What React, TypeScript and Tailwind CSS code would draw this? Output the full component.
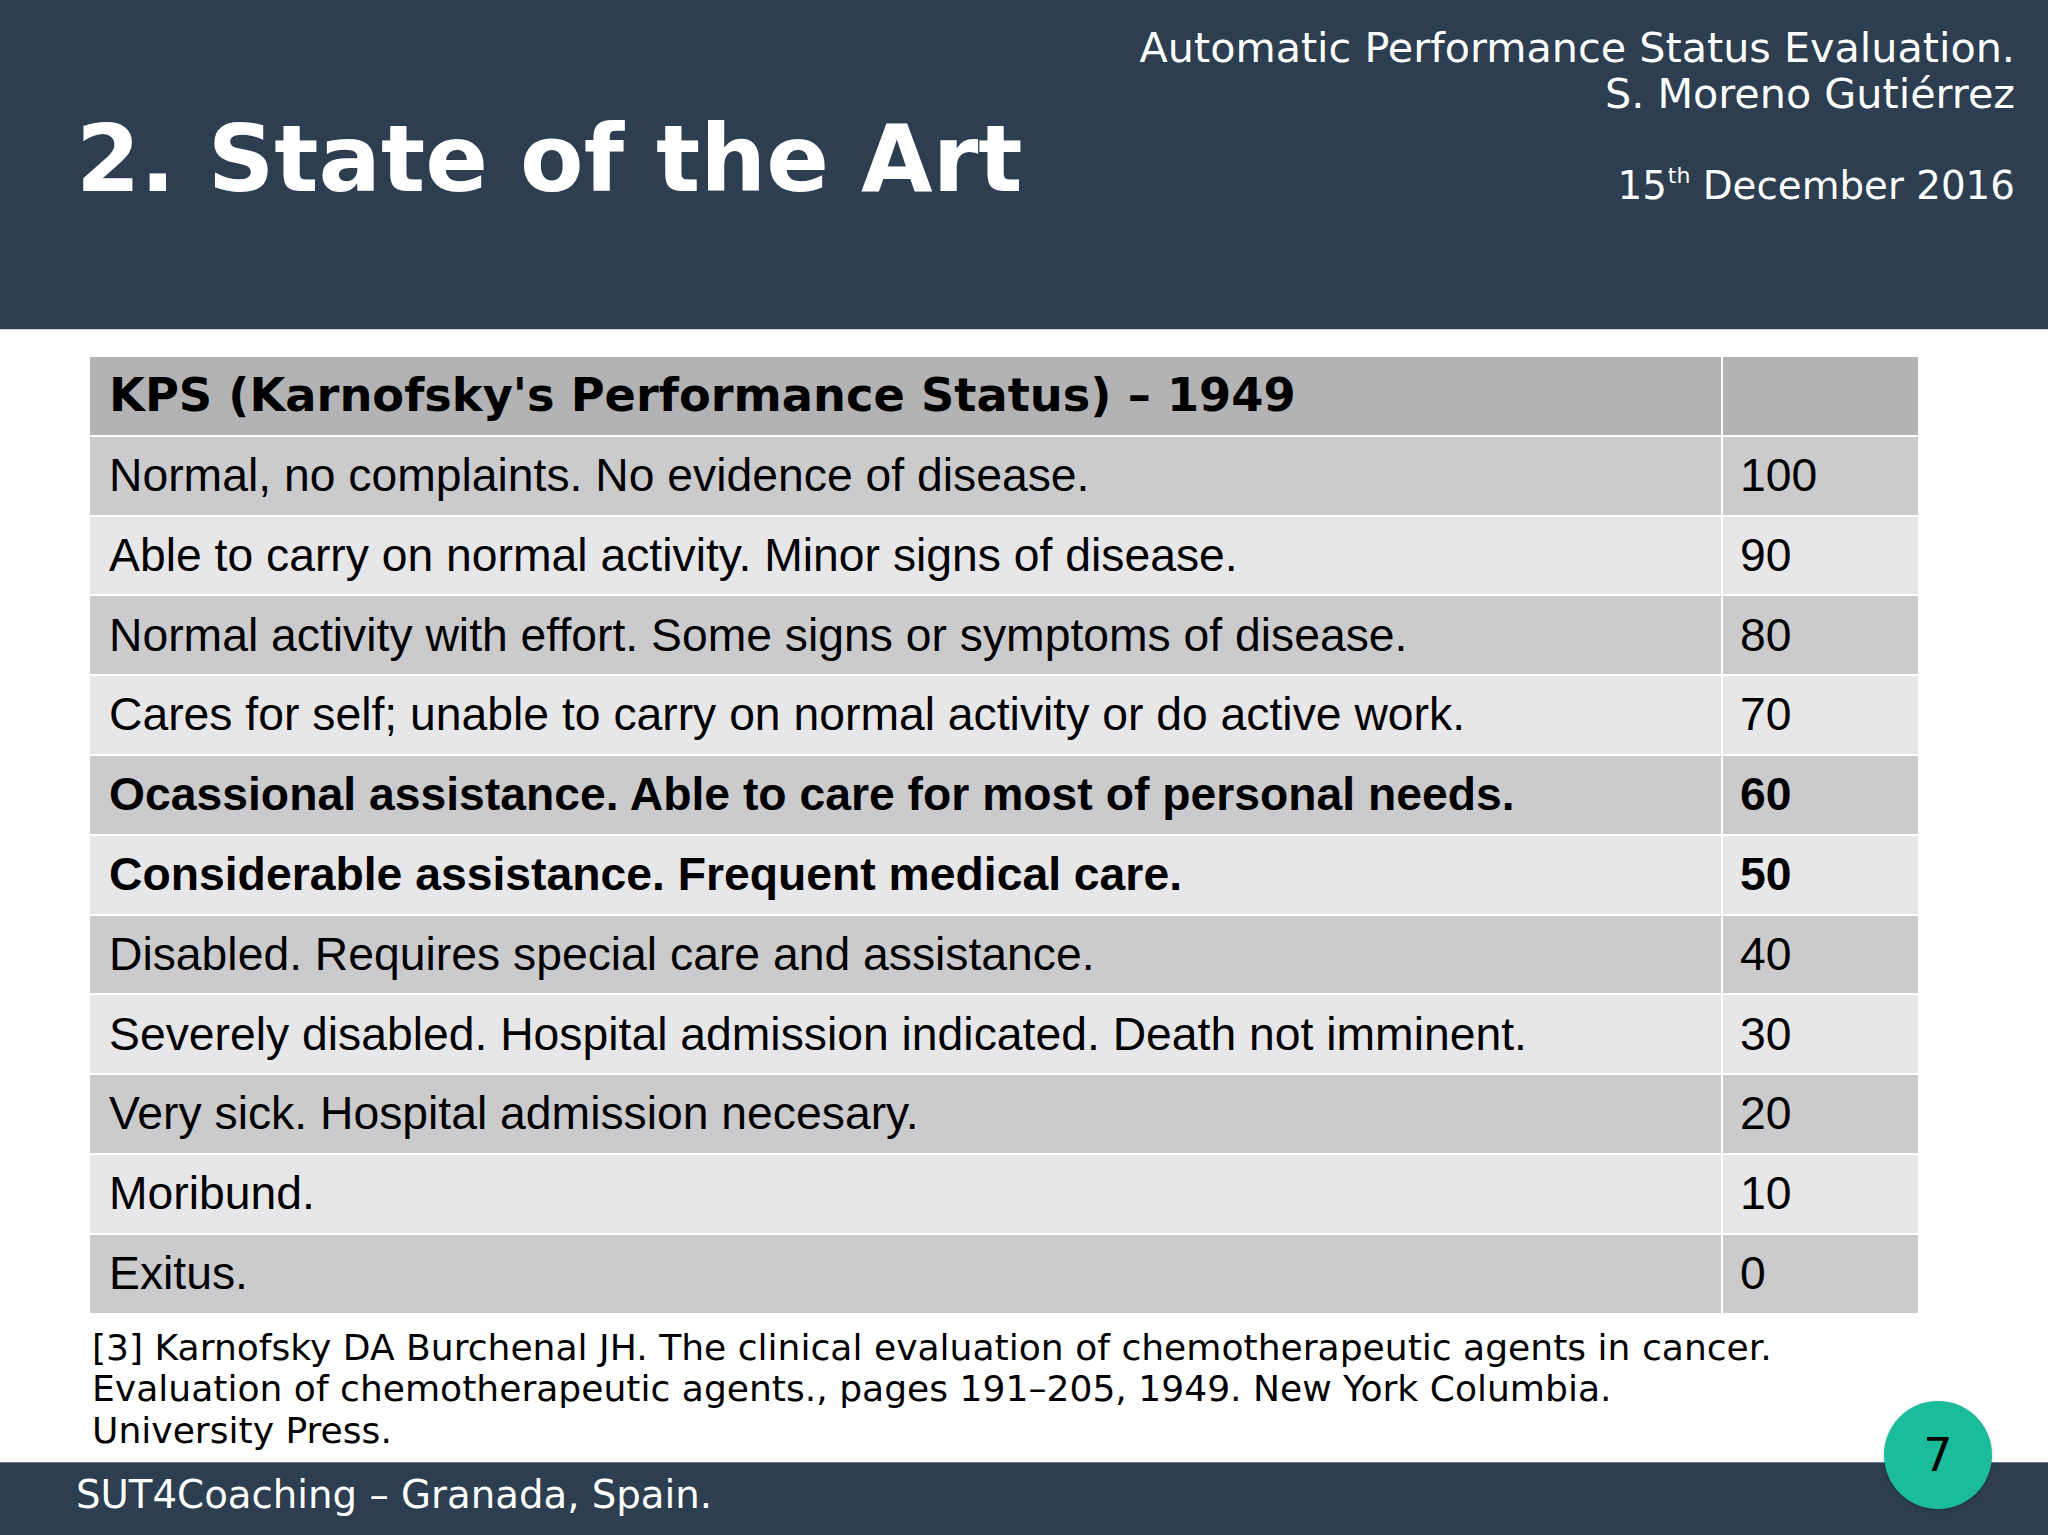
import React from "react";

const rows: { t: string; v: string; bold?: boolean }[] = [
  { t: "Normal, no complaints. No evidence of disease.", v: "100" },
  { t: "Able to carry on normal activity. Minor signs of disease.", v: "90" },
  { t: "Normal activity with effort. Some signs or symptoms of disease.", v: "80" },
  { t: "Cares for self; unable to carry on normal activity or do active work.", v: "70" },
  { t: "Ocassional assistance. Able to care for most of personal needs.", v: "60", bold: true },
  { t: "Considerable assistance. Frequent medical care.", v: "50", bold: true },
  { t: "Disabled. Requires special care and assistance.", v: "40" },
  { t: "Severely disabled. Hospital admission indicated. Death not imminent.", v: "30" },
  { t: "Very sick. Hospital admission necesary.", v: "20" },
  { t: "Moribund.", v: "10" },
  { t: "Exitus.", v: "0" },
];

export default function App() {
  return (
    <div className="relative w-[2048px] h-[1535px] bg-white flex flex-col overflow-hidden font-['DejaVu_Sans',sans-serif]">
      {/* Header */}
      <div className="h-[330px] shrink-0 bg-[#2c3e50] border-b border-[#c8d6e3] flex justify-between">
        <h1 className="pl-[76px] pt-[113px] text-[92.5px] leading-[93px] font-bold text-white">
          2. State of the Art
        </h1>
        <div className="pr-[33px] pt-[25px] text-right text-white text-[41.3px] leading-[46px]">
          <div>Automatic Performance Status Evaluation.</div>
          <div>S. Moreno Gutiérrez</div>
          <div className="mt-[46px] text-[38.8px]">
            15<sup className="text-[22px] leading-none relative -top-[16px] ml-[1px]">th</sup> December 2016
          </div>
        </div>
      </div>

      {/* Main */}
      <div className="flex-1 flex flex-col">
        <div className="ml-[90px] mt-[27px] w-[1828px] flex flex-col gap-[2px] bg-white">
          <div className="flex h-[77.8px] gap-[2px]">
            <div className="w-[1631px] bg-[#b3b2b5] flex items-center pl-[19px] font-bold text-[46.3px] text-black font-['DejaVu_Sans',sans-serif]">
              KPS (Karnofsky's Performance Status) – 1949
            </div>
            <div className="flex-1 bg-[#b3b2b5]" />
          </div>
          {rows.map((r, i) => {
            const bg = i % 2 === 0 ? "bg-[#cbcacd]" : "bg-[#e7e6e9]";
            const w = r.bold ? "font-bold" : "font-normal";
            return (
              <div key={i} className="flex h-[77.8px] gap-[2px] font-['Liberation_Sans',Arial,sans-serif] text-[46.3px] text-black">
                <div className={`w-[1631px] ${bg} ${w} flex items-center pl-[19px]`}>{r.t}</div>
                <div className={`flex-1 ${bg} ${w} flex items-center pl-[17px]`}>{r.v}</div>
              </div>
            );
          })}
        </div>
        <div className="ml-[92px] mt-[15px] text-[36.1px] leading-[41.5px] text-black">
          <div>[3] Karnofsky DA Burchenal JH. The clinical evaluation of chemotherapeutic agents in cancer.</div>
          <div>Evaluation of chemotherapeutic agents., pages 191–205, 1949. New York Columbia.</div>
          <div>University Press.</div>
        </div>
      </div>

      {/* Footer */}
      <div className="h-[73px] shrink-0 bg-[#2c3e50] border-t border-[#6b7a8a] pl-[76px] pt-[3px] text-[38.7px] text-white">
        SUT4Coaching – Granada, Spain.
      </div>

      {/* Page badge */}
      <div className="absolute left-[1884px] top-[1401px] w-[108px] h-[108px] rounded-full bg-[#1abc9c] flex items-center justify-center text-[46px] text-black shadow-[0_1px_3px_rgba(0,0,0,0.25)]">
        7
      </div>
    </div>
  );
}
